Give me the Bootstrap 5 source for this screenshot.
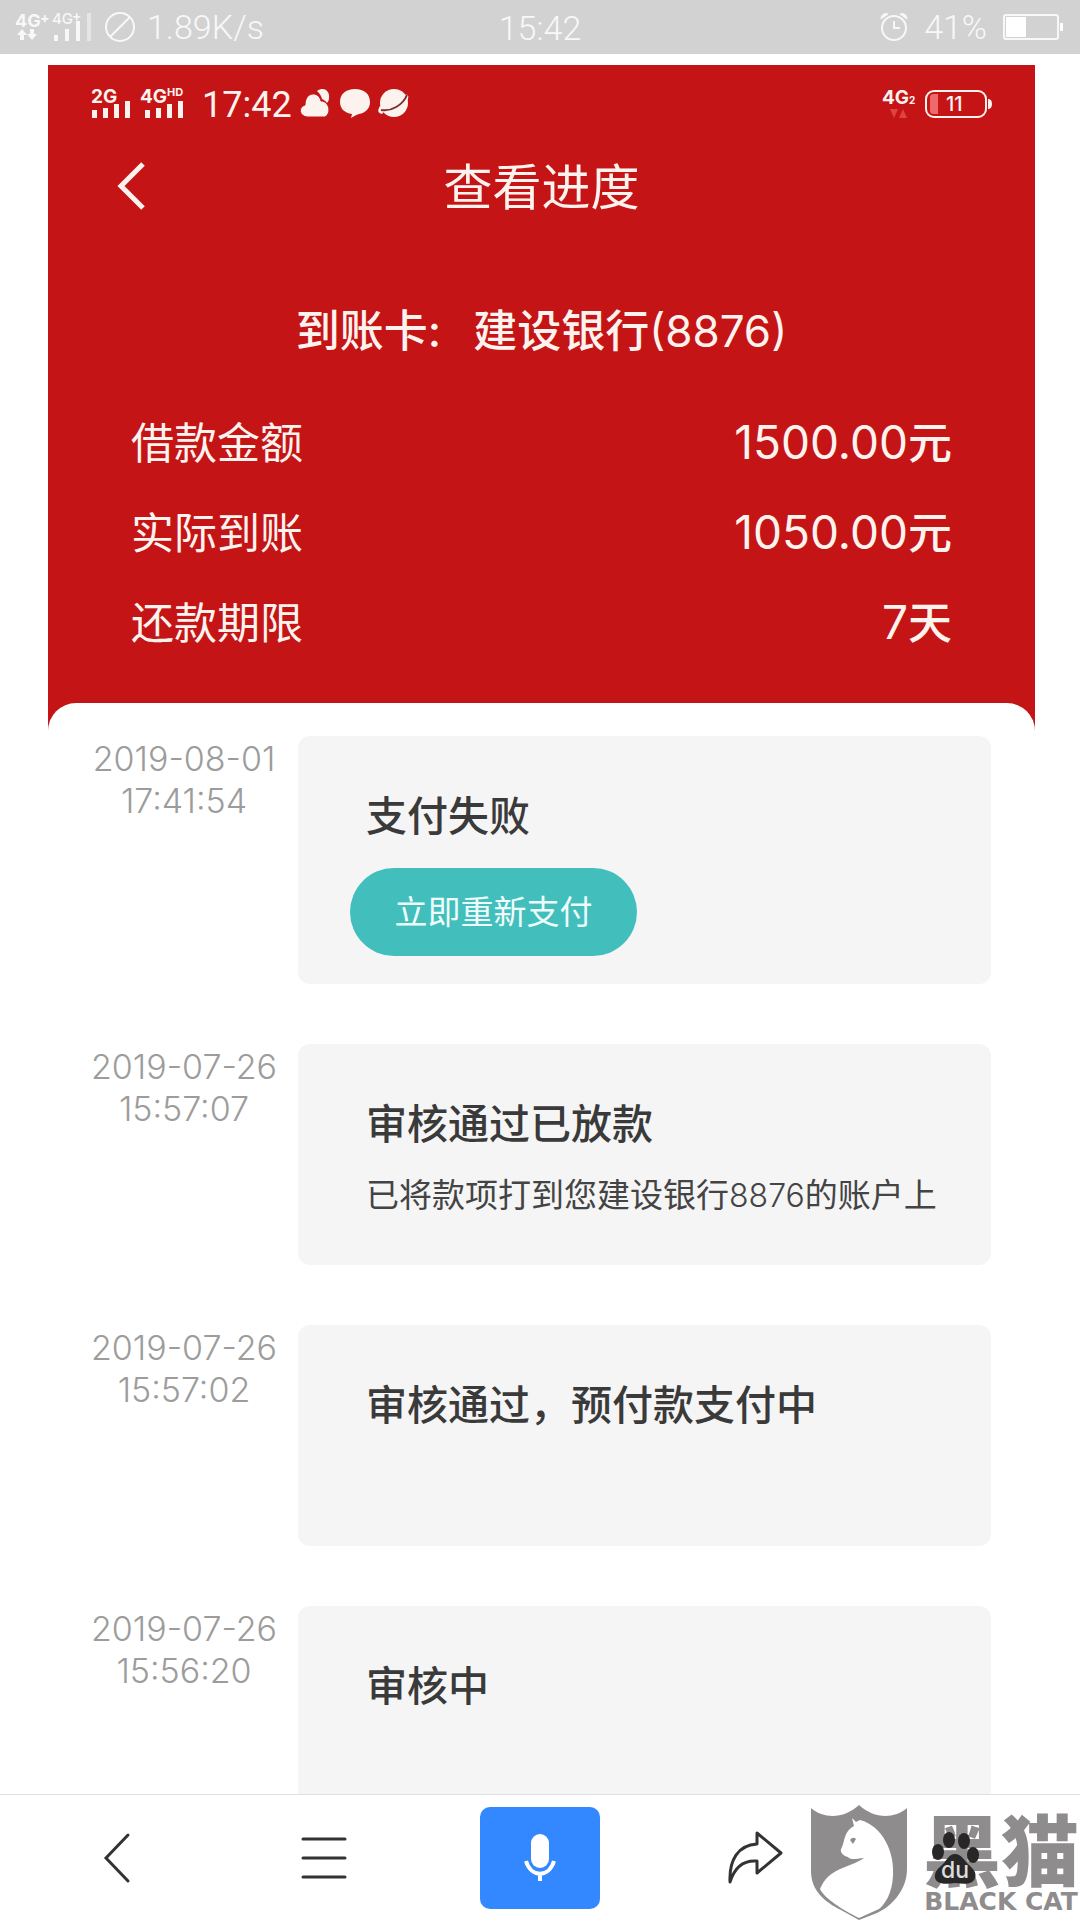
<!DOCTYPE html>
<html lang="zh-CN">
<head>
<meta charset="utf-8">
<meta name="viewport" content="width=device-width, initial-scale=1">
<title>查看进度</title>
<link rel="stylesheet" href="https://cdn.jsdelivr.net/npm/bootstrap@5.3.0/dist/css/bootstrap.min.css">
<style>
  body { font-family: Inter, "Noto Sans CJK SC", sans-serif; background: #fff; color: #3a3a3a; }
  svg { display: block; flex: none; }
  .sysbar { height: 54px; background: #d2d2d2; color: #f8f8f8; padding: 0 15px; font: 300 34px/56px Roboto, sans-serif; }
  .sysbar > div { flex: 1 1 0; }
  .screen { padding: 11px 45px 0 48px; }
  .hero { background: #c41416; color: #fdf3ee; padding-bottom: 63px; }
  .phonebar { height: 74px; padding: 2px 42px 0; font: 400 36px/68px Roboto, sans-serif; }
  .topbar { height: 98px; }
  .topbar h1 { font-size: 49px; line-height: 98px; font-weight: 400; }
  .back { left: 60px; top: 14px; padding: 8px; color: #fdf3ee; }
  .account { font-size: 44px; line-height: 60px; font-weight: 500; margin-top: 64px; padding-bottom: 37px; }
  .account-name { margin-left: 32px; }
  .facts { padding: 0 83px; font-size: 44px; line-height: 90px; }
  .facts dt { font-size: 43px; font-weight: 400; }
  .facts dd { font-weight: 500; }
  .figure-num { font-size: 46px; line-height: 1; font-weight: 400; }
  .account .figure-num { font-size: 44px; }
  .sheet { background: #fff; border-radius: 28px 28px 0 0; margin-top: -28px; padding: 33px 44px 0 32px; }
  .step { gap: 10px; margin-bottom: 60px; }
  .stamp { width: 208px; font-size: 34px; line-height: 42px; font-weight: 300; color: #9c9c9c; padding-top: 2px; }
  .panel { background: #f5f5f5; border-radius: 12px; min-height: 221px; padding: 50px 20px 28px 68px; }
  .panel h2 { font-size: 41px; line-height: 60px; font-weight: 500; margin: 0; }
  .panel p { font-size: 33px; line-height: 46px; margin: 18px 0 0; color: #444; }
  .tail-num { font-size: 32px; line-height: 1; font-weight: 300; }
  .pay { height: 88px; width: 287px; margin: 22px 0 0 -16px; border-radius: 44px; background: #42bfbd; color: #eefdfb; font-size: 33px; line-height: 88px; padding: 0; }
  .pay:hover { background: #38adab; color: #fff; }
  .tabs { height: 126px; border-top: 1px solid #e0e0e0; background: #fff; }
  .tab { width: 20%; color: #333; }
  .mic { width: 120px; height: 102px; border-radius: 10px; background: #38f; }
  .tab-first { padding-left: 18px; }
  .tab-last { padding-right: 32px; z-index: 2; }
  .brand { right: 1px; bottom: 0; gap: 15px; color: #8f8c8d; z-index: 1; }
  .brand-zh { font: 900 78px/82px "Noto Sans CJK SC", sans-serif; }
  .brand-en { font: 700 25px/28px "DejaVu Sans", sans-serif; }
</style>
<script src="https://cdn.jsdelivr.net/npm/bootstrap@5.3.0/dist/js/bootstrap.bundle.min.js"></script>
</head>
<body>
<div class="vh-100 d-flex flex-column overflow-hidden">

  <header class="sysbar d-flex flex-shrink-0">
    <div class="d-flex align-items-center gap-2">
      <svg width="124" height="54" viewBox="15 0 124 54" fill="currentColor" font-family="Inter, sans-serif">
        <text x="15" y="27" font-size="18" font-weight="700">4G</text>
        <text x="40" y="23" font-size="14" font-weight="700">+</text>
        <path d="M22 29l5 6h-3v5h-4v-5h-3zM32 40l-5-6h3v-5h4v5h3z"/>
        <text x="52" y="24" font-size="15" font-weight="500">4G</text>
        <text x="72" y="21" font-size="14" font-weight="600">+</text>
        <path d="M54 35h4v6h-4zM65 29h4v12h-4zM76 21h4v20h-4z"/>
        <path d="M87 13h4v28h-4z" opacity=".5"/>
        <g fill="none" stroke="currentColor" stroke-width="2"><circle cx="120" cy="27" r="14"/><path d="M110 37l20-20"/></g>
      </svg>
      <span>1.89K/s</span>
    </div>
    <div class="text-center">15:42</div>
    <div class="d-flex align-items-center justify-content-end">
      <svg width="28" height="30" viewBox="0 0 28 30" fill="none" stroke="currentColor" stroke-width="2">
        <circle cx="14" cy="16" r="12"/><path d="M14 9v7h6"/>
        <path d="M1 7a5 5 0 0 1 7-5zM27 7a5 5 0 0 0-7-5z" fill="currentColor" stroke-width="1"/>
      </svg>
      <span class="mx-3">41%</span>
      <svg width="62" height="28" viewBox="0 0 62 28">
        <rect x="1" y="2" width="54" height="24" rx="2" fill="none" stroke="currentColor" stroke-width="2"/>
        <path d="M3 4h20v20H3zM57 10h3v8h-3z" fill="#fff"/>
      </svg>
    </div>
  </header>

  <main class="screen flex-grow-1 overflow-hidden">
    <section class="hero">
      <div class="phonebar d-flex align-items-center justify-content-between">
        <div class="d-flex align-items-center">
          <svg width="100" height="46" viewBox="0 -6 100 46" fill="currentColor" font-family="Inter, sans-serif" font-weight="700">
            <text x="1" y="17" font-size="19">2G</text>
            <text x="50" y="17" font-size="19">4G</text>
            <text x="77" y="10" font-size="11">HD</text>
            <path d="M2 24h5v8H2zM13 22h5v10h-5zM24 18h5v14h-5zM35 15h5v17h-5zM55 24h5v8h-5zM66 22h5v10h-5zM77 18h5v14h-5zM88 15h5v17h-5z"/>
          </svg>
          <span class="mx-2 ps-1 pt-1">17:42</span>
          <svg width="114" height="32" viewBox="0 0 114 32" fill="currentColor">
            <path d="M17 4c7-5 13 0 12 7 0 2-1 4-2 5-2-3-5-4-5-4-1-4-3-6-5-8z"/>
            <path d="M7 30c-8-1-9-10-2-12C5 4 19 4 21 14c8 0 11 12 4 16z" stroke="#c41416"/>
            <path d="M55 2c9 0 15 5 15 13 0 7-5 11-11 12-3 1-5 2-8 4l1-4c-8-1-12-6-12-12 0-8 6-13 15-13z"/>
            <circle cx="94" cy="16" r="14"/>
            <path d="M80 19c-3 5-2 7 2 8l4-5zM105 8c4-1 4 2 2 6l-2 2z"/>
            <path d="M81 23c10 2 22-5 26-15" fill="none" stroke="#7d2f30" stroke-width="2"/>
          </svg>
        </div>
        <svg width="112" height="46" viewBox="0 -6 112 46" fill="currentColor" font-family="Inter, sans-serif" font-weight="700">
          <text x="1" y="18" font-size="19">4G</text>
          <text x="28" y="18" font-size="10">2</text>
          <path d="M9 23h8l-4 9zM18 32l4-9 4 9z" fill="#e04344"/>
          <rect x="45" y="5" width="60" height="26" rx="8" fill="none" stroke="currentColor" stroke-width="2"/>
          <path d="M49 11q0-3 4-3h4v20h-4q-4 0-4-3z" fill="#f0686b"/>
          <path d="M107 13q4 0 4 5t-4 5z"/>
          <text x="65" y="25" font-size="20" font-weight="500">11</text>
        </svg>
      </div>

      <div class="topbar position-relative text-center">
        <a class="back position-absolute" href="#" aria-label="返回">
          <svg width="32" height="50" viewBox="0 0 32 50" fill="none" stroke="currentColor" stroke-width="5"><path d="M27 3L5 25l22 22"/></svg>
        </a>
        <h1 class="m-0">查看进度</h1>
      </div>

      <div class="account text-center"><span>到账卡:</span><span class="account-name">建设银行<span class="figure-num">(8876)</span></span></div>

      <dl class="facts mb-0">
        <div class="d-flex justify-content-between"><dt>借款金额</dt><dd class="m-0"><span class="figure-num">1500.00</span>元</dd></div>
        <div class="d-flex justify-content-between"><dt>实际到账</dt><dd class="m-0"><span class="figure-num">1050.00</span>元</dd></div>
        <div class="d-flex justify-content-between"><dt>还款期限</dt><dd class="m-0"><span class="figure-num">7</span>天</dd></div>
      </dl>
    </section>

    <section class="sheet position-relative">
      <article class="step d-flex">
        <time class="stamp flex-shrink-0 text-center">2019-08-01<br>17:41:54</time>
        <div class="panel flex-grow-1">
          <h2>支付失败</h2>
          <button type="button" class="btn pay border-0 d-block">立即重新支付</button>
        </div>
      </article>
      <article class="step d-flex">
        <time class="stamp flex-shrink-0 text-center">2019-07-26<br>15:57:07</time>
        <div class="panel flex-grow-1">
          <h2>审核通过已放款</h2>
          <p class="text-nowrap">已将款项打到您建设银行<span class="tail-num">8876</span>的账户上</p>
        </div>
      </article>
      <article class="step d-flex">
        <time class="stamp flex-shrink-0 text-center">2019-07-26<br>15:57:02</time>
        <div class="panel flex-grow-1"><h2>审核通过，预付款支付中</h2></div>
      </article>
      <article class="step d-flex">
        <time class="stamp flex-shrink-0 text-center">2019-07-26<br>15:56:20</time>
        <div class="panel flex-grow-1"><h2>审核中</h2></div>
      </article>
    </section>
  </main>

  <nav class="tabs position-relative d-flex flex-shrink-0">
    <a class="tab tab-first d-flex align-items-center justify-content-center" href="#" aria-label="后退">
      <svg width="30" height="54" viewBox="0 0 30 54" fill="none" stroke="currentColor" stroke-width="3" stroke-linecap="round"><path d="M26 4L4 27l22 23"/></svg>
    </a>
    <a class="tab d-flex align-items-center justify-content-center" href="#" aria-label="菜单">
      <svg width="46" height="44" viewBox="0 0 46 44" fill="none" stroke="currentColor" stroke-width="3" stroke-linecap="round"><path d="M2 3h42M2 22h42M2 41h42"/></svg>
    </a>
    <div class="tab d-flex align-items-center justify-content-center">
      <button type="button" class="mic btn border-0 p-0 d-flex align-items-center justify-content-center" aria-label="语音">
        <svg width="40" height="50" viewBox="0 0 40 50"><rect x="11" y="1" width="18" height="34" rx="9" fill="#fff"/><path d="M6 28c5 17 23 17 28 0M20 41v7" fill="none" stroke="#fff" stroke-width="4"/></svg>
      </button>
    </div>
    <a class="tab d-flex align-items-center justify-content-center" href="#" aria-label="分享">
      <svg width="56" height="56" viewBox="0 0 56 56" fill="none" stroke="currentColor" stroke-width="3" stroke-linejoin="round"><path d="M29 3l24 20-24 20V31C17 30 7 36 2 52 1 30 10 15 29 14z"/></svg>
    </a>
    <a class="tab tab-last position-relative d-flex align-items-center justify-content-center" href="#" aria-label="百度首页">
      <svg width="50" height="54" viewBox="0 0 50 54" fill="#282728">
        <ellipse cx="18" cy="9" rx="6" ry="8"/><ellipse cx="33" cy="10" rx="6" ry="8"/>
        <ellipse cx="7" cy="21" rx="6" ry="8"/><ellipse cx="42" cy="24" rx="6" ry="8"/>
        <path d="M24 23c6 0 9 6 13 10 5 5 9 8 7 14-2 7-11 6-20 5-8 1-18 2-20-5-1-7 4-10 8-14 4-4 6-10 12-10z"/>
        <text x="10" y="47" font-family="Inter, sans-serif" font-weight="500" font-size="23" fill="#dedcdd">du</text>
      </svg>
    </a>
    <div class="brand position-absolute d-flex align-items-end">
      <svg width="98" height="115" viewBox="0 0 98 115">
        <path d="M1 3c14 12 34 10 48-3 14 13 34 15 48 3v61c0 21-15 37-30 44l-18 7-18-10C15 97 1 86 1 66z" fill="#8f8c8d"/>
        <path d="M42 13l4 4 4-2c23 6 35 33 33 56-1 18-8 28-14 33l-20 9C33 105 15 94 10 84c9-22 30-21 44-31-9 1-14 2-16-1-5-1-8-5-7-8 4-6 2-17 13-23z" fill="#fff"/>
        <path d="M40 35q3-4 6-1l-3 5zM41 35l4 2" fill="#8f8c8d"/>
      </svg>
      <div class="text-center pb-1">
        <div class="brand-zh">黑猫</div>
        <div class="brand-en text-nowrap">BLACK CAT</div>
      </div>
    </div>
  </nav>
</div>
</body>
</html>
